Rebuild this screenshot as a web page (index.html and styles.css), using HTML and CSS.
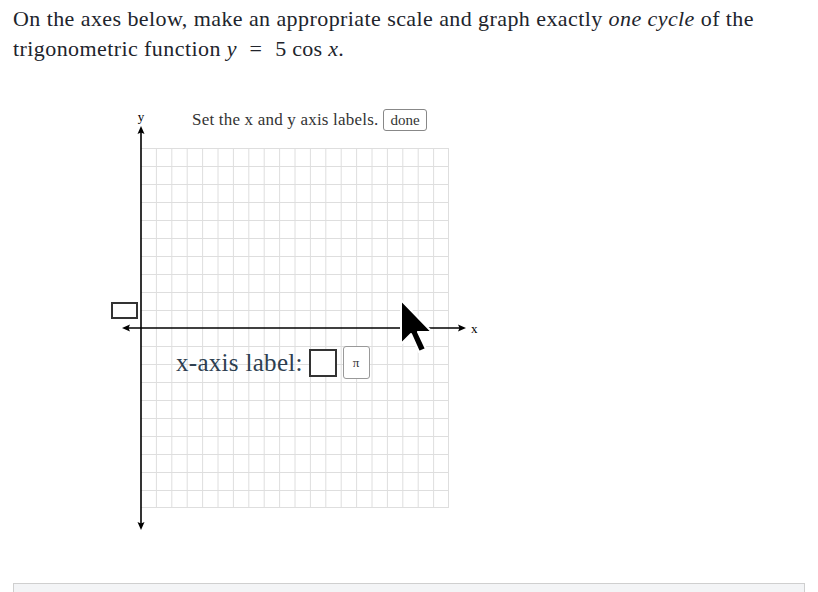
FILE: index.html
```html
<!DOCTYPE html>
<html>
<head>
<meta charset="utf-8">
<link rel="stylesheet" href="styles.css">
</head>
<body>
<p class="prompt">On the axes below, make an appropriate scale and graph exactly <em>one cycle</em> of the trigonometric function <span class="math"><i>y</i> <span class="eq">=</span> 5 cos <i>x</i>.</span></p>
<div class="graph">
  <svg class="plane" width="480" height="440" viewBox="0 0 480 440">
    <g class="grid" stroke="#dedede" stroke-width="1">
      <line x1="56.4" y1="48" x2="56.4" y2="408"/><line x1="71.8" y1="48" x2="71.8" y2="408"/><line x1="87.2" y1="48" x2="87.2" y2="408"/><line x1="102.6" y1="48" x2="102.6" y2="408"/><line x1="118" y1="48" x2="118" y2="408"/><line x1="133.4" y1="48" x2="133.4" y2="408"/><line x1="148.8" y1="48" x2="148.8" y2="408"/><line x1="164.2" y1="48" x2="164.2" y2="408"/><line x1="179.6" y1="48" x2="179.6" y2="408"/><line x1="195" y1="48" x2="195" y2="408"/><line x1="210.4" y1="48" x2="210.4" y2="408"/><line x1="225.8" y1="48" x2="225.8" y2="408"/><line x1="241.2" y1="48" x2="241.2" y2="408"/><line x1="256.6" y1="48" x2="256.6" y2="408"/><line x1="272" y1="48" x2="272" y2="408"/><line x1="287.4" y1="48" x2="287.4" y2="408"/><line x1="302.8" y1="48" x2="302.8" y2="408"/><line x1="318.2" y1="48" x2="318.2" y2="408"/><line x1="333.6" y1="48" x2="333.6" y2="408"/><line x1="348.5" y1="48" x2="348.5" y2="408"/>
      <line x1="41" y1="48.5" x2="349" y2="48.5"/><line x1="41" y1="66.5" x2="349" y2="66.5"/><line x1="41" y1="84.5" x2="349" y2="84.5"/><line x1="41" y1="102.5" x2="349" y2="102.5"/><line x1="41" y1="120.5" x2="349" y2="120.5"/><line x1="41" y1="138.5" x2="349" y2="138.5"/><line x1="41" y1="156.5" x2="349" y2="156.5"/><line x1="41" y1="174.5" x2="349" y2="174.5"/><line x1="41" y1="192.5" x2="349" y2="192.5"/><line x1="41" y1="210.5" x2="349" y2="210.5"/><line x1="41" y1="246.5" x2="349" y2="246.5"/><line x1="41" y1="264.5" x2="349" y2="264.5"/><line x1="41" y1="282.5" x2="349" y2="282.5"/><line x1="41" y1="300.5" x2="349" y2="300.5"/><line x1="41" y1="318.5" x2="349" y2="318.5"/><line x1="41" y1="336.5" x2="349" y2="336.5"/><line x1="41" y1="354.5" x2="349" y2="354.5"/><line x1="41" y1="372.5" x2="349" y2="372.5"/><line x1="41" y1="390.5" x2="349" y2="390.5"/><line x1="41" y1="407.5" x2="349" y2="407.5"/>
    </g>
    <g stroke="#000" stroke-width="1.6">
      <line x1="41" y1="32" x2="41" y2="424"/>
      <line x1="28" y1="228" x2="360" y2="228"/>
    </g>
    <g fill="#000">
      <path d="M41 26 L44.5 34 L41 32.5 L37.5 34 Z"/>
      <path d="M41 430 L44.5 422 L41 423.5 L37.5 422 Z"/>
      <path d="M22 228 L30 224.5 L28.5 228 L30 231.5 Z"/>
      <path d="M366 228 L358 224.5 L359.5 228 L358 231.5 Z"/>
    </g>
    <text class="axlabel" x="41" y="21" text-anchor="middle">y</text>
    <text class="axlabel" x="371" y="233">x</text>
  </svg>
  <div class="instr">Set the x and y axis labels. <button class="done">done</button></div>
  <div class="ybox"></div>
  <div class="xlabel">x-axis label: <span class="xinput"></span> <span class="pibtn">π</span></div>
  <svg class="cursor" width="36" height="56" viewBox="0 0 36 56">
    <path d="M2 1 L2 45 L12 35 L20 53 L27 50 L19 33 L33 33 Z" fill="#000" stroke="#fff" stroke-width="2" stroke-linejoin="round"/>
  </svg>
</div>
<div class="footer-bar"></div>
</body>
</html>
```
FILE: styles.css
```css
html, body {
  margin: 0;
  padding: 0;
  background: #fff;
}
body {
  padding: 4px 13px 0 13px;
  font-family: "Liberation Serif", "Times New Roman", serif;
  color: #21242c;
}
.prompt {
  margin: 0;
  font-size: 22px;
  line-height: 30px;
  letter-spacing: 0.42px;
  width: 770px;
}
.prompt em {
  font-style: italic;
}
.math {
  font-family: "Liberation Serif", "Times New Roman", serif;
  font-size: 22px;
  letter-spacing: 0.3px;
}
.math .eq {
  padding: 0 7px;
}
.graph {
  position: relative;
  width: 480px;
  height: 440px;
  margin: 36px 0 0 87px;
}
.plane {
  display: block;
}
.axlabel {
  font-family: "Liberation Serif", serif;
  font-size: 13px;
  fill: #000;
}
.instr {
  position: absolute;
  left: 92px;
  top: 9px;
  font-family: "Liberation Serif", serif;
  font-size: 17px;
  letter-spacing: 0.2px;
  color: #333;
  display: flex;
  align-items: center;
  gap: 5px;
}
.done {
  font-family: "Liberation Serif", serif;
  font-size: 15px;
  color: #333;
  background: #fff;
  border: 1px solid #888;
  border-radius: 3px;
  padding: 1px 6px;
  height: 22px;
  margin: 0;
}
.ybox {
  position: absolute;
  left: 11px;
  top: 202px;
  width: 23px;
  height: 13px;
  border: 2px solid #333;
  background: #fff;
}
.xlabel {
  position: absolute;
  left: 76px;
  top: 246px;
  font-family: "Liberation Serif", serif;
  font-size: 25px;
  letter-spacing: 0.3px;
  color: #2d3e50;
  display: flex;
  align-items: center;
  gap: 6px;
}
.xinput {
  display: inline-block;
  width: 24px;
  height: 24px;
  border: 2px solid #333;
  background: #fff;
}
.pibtn {
  display: inline-flex;
  align-items: center;
  justify-content: center;
  width: 25px;
  height: 31px;
  border: 1px solid #999;
  border-radius: 3px;
  background: #fff;
  font-family: "Liberation Serif", serif;
  font-size: 13px;
  color: #333;
}
.cursor {
  position: absolute;
  left: 299px;
  top: 199px;
}
.footer-bar {
  margin-top: 43px;
  height: 20px;
  border: 1px solid #cfcfcf;
  background: #f3f4f6;
  width: 790px;
}
```
